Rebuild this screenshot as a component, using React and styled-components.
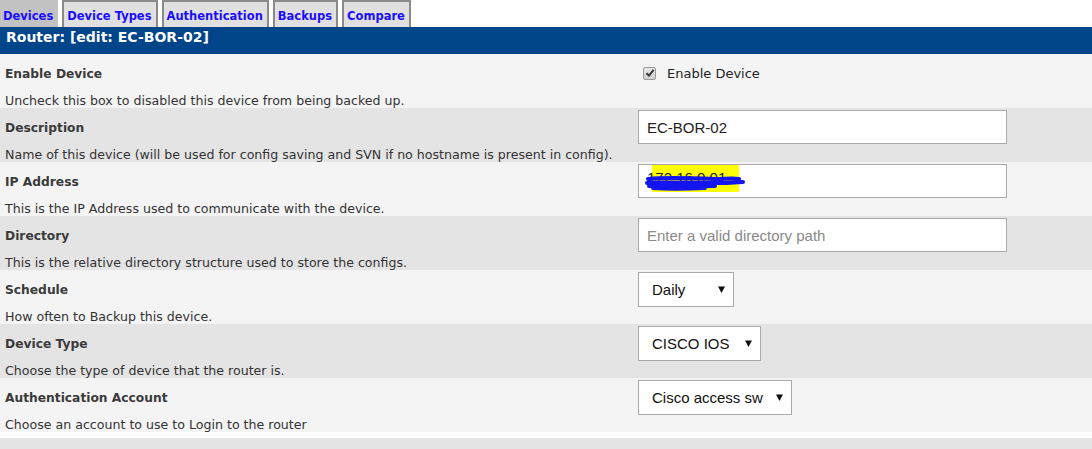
import React from 'react';
import styled, { createGlobalStyle } from 'styled-components';

const GlobalStyle = createGlobalStyle`
  body {
    margin: 0;
    background: #fff;
    font-family: "DejaVu Sans", Verdana, sans-serif;
  }
`

const tabs = ['Devices', 'Device Types', 'Authentication', 'Backups', 'Compare']

const rows = [
  { label: 'Enable Device', desc: 'Uncheck this box to disabled this device from being backed up.', kind: 'check' },
  { label: 'Description', desc: 'Name of this device (will be used for config saving and SVN if no hostname is present in config).', kind: 'text', value: 'EC-BOR-02' },
  { label: 'IP Address', desc: 'This is the IP Address used to communicate with the device.', kind: 'ip' },
  { label: 'Directory', desc: 'This is the relative directory structure used to store the configs.', kind: 'text', placeholder: 'Enter a valid directory path' },
  { label: 'Schedule', desc: 'How often to Backup this device.', kind: 'select', value: 'Daily', width: 96 },
  { label: 'Device Type', desc: 'Choose the type of device that the router is.', kind: 'select', value: 'CISCO IOS', width: 123 },
  { label: 'Authentication Account', desc: 'Choose an account to use to Login to the router', kind: 'select', value: 'Cisco access sw', width: 154 },
]

const Arrow = () => (
  <svg width="7" height="7" viewBox="0 0 7 7">
    <path d="M0 0.5 H7 L3.5 7 Z" fill="#111" />
  </svg>
)

const Tick = () => (
  <svg width="10" height="10" viewBox="0 0 10 10">
    <path d="M1.5 5.2 L4 7.6 L8.6 1.8" stroke="#333" strokeWidth="2" fill="none" />
  </svg>
)

const Control = ({ row }) => {
  if (row.kind === 'check') {
    return (
      <CheckLabel>
        <CheckBox><Tick /></CheckBox>
        Enable Device
      </CheckLabel>
    )
  }
  if (row.kind === 'select') {
    return (
      <SelectBox style={{ width: row.width }}>
        <span>{row.value}</span>
        <Arrow />
      </SelectBox>
    )
  }
  if (row.kind === 'ip') {
    return (
      <FakeInput>
        <Masked>
          <MaskedText>172.16.0.01</MaskedText>
          <Scribble width="100" height="18" viewBox="0 0 100 18">
            <path d="M3 5 C20 3 45 4 70 5 C80 5 88 4 94 5 M2 9 C25 8 50 9 75 9 C85 9 92 8 98 8 M4 12 C25 13 50 12 70 12 M8 14 C20 15 40 15 60 14"
              stroke="#1414f0" strokeWidth="4" fill="none" strokeLinecap="round" />
          </Scribble>
        </Masked>
      </FakeInput>
    )
  }
  return <TextInput defaultValue={row.value} placeholder={row.placeholder} />
}

const App = () => {
  return (
    <>
      <GlobalStyle />
      <TabBar>
        {tabs.map((t, i) => (
          <Tab key={t} active={i === 0}>{t}</Tab>
        ))}
      </TabBar>
      <Header>Router: [edit: EC-BOR-02]</Header>
      {rows.map((row, i) => (
        <Row key={row.label} dark={i % 2 === 1}>
          <LeftCell>
            <Label>{row.label}</Label>
            <Desc>{row.desc}</Desc>
          </LeftCell>
          <RightCell check={row.kind === 'check'}>
            <Control row={row} />
          </RightCell>
        </Row>
      ))}
      <Footer />
    </>
  );
};

const TabBar = styled.div`
  display: flex;
  gap: 4px;
  height: 27px;
`

const Tab = styled.div`
  box-sizing: border-box;
  height: 27px;
  padding: ${p => (p.active ? '2px 3px 0 3px' : '2px 4px 0 3px')};
  display: flex;
  align-items: center;
  font-size: 11.5px;
  font-weight: bold;
  color: #1a0dff;
  background: ${p => (p.active ? '#c2c2c2' : '#e0e0e0')};
  border: 2px solid ${p => (p.active ? '#c2c2c2' : '#8a8a8a')};
  border-left-width: ${p => (p.active ? '0' : '2px')};
  border-bottom: none;
`

const Header = styled.div`
  height: 27px;
  background: #00448a;
  color: #fff;
  font-size: 14px;
  font-weight: bold;
  padding-left: 6px;
  line-height: 21px;
`

const Row = styled.div`
  display: grid;
  grid-template-columns: 638px 1fr;
  height: 54px;
  background: ${p => (p.dark ? '#e4e4e4' : '#f4f4f4')};
`

const LeftCell = styled.div`
  padding: 11px 5px 0;
  display: flex;
  flex-direction: column;
  gap: 10px;
`

const Label = styled.div`
  font-size: 12.25px;
  font-weight: bold;
  line-height: 18px;
  color: #3a3a3a;
`

const Desc = styled.div`
  font-size: 12.6px;
  line-height: 15px;
  color: #333;
  white-space: nowrap;
`

const RightCell = styled.div`
  padding-top: ${p => (p.check ? '10px' : '2px')};
`

const CheckLabel = styled.div`
  display: flex;
  align-items: center;
  gap: 11px;
  height: 18px;
  padding-left: 5px;
  font-size: 13px;
  color: #222;
`

const CheckBox = styled.span`
  box-sizing: border-box;
  width: 13px;
  height: 13px;
  border: 1px solid #9a9a9a;
  border-radius: 2px;
  background: linear-gradient(#e8e8e8, #cfcfcf);
  display: flex;
  align-items: center;
  justify-content: center;
`

const TextInput = styled.input`
  box-sizing: border-box;
  width: 369px;
  height: 34px;
  border: 1px solid #a9a9a9;
  padding: 0 8px;
  font-family: "Liberation Sans", Arial, sans-serif;
  font-size: 15px;
  color: #222;
  background: #fff;
  outline: none;
  &::placeholder {
    color: #8a8a8a;
  }
`

const FakeInput = styled.div`
  box-sizing: border-box;
  width: 369px;
  height: 34px;
  border: 1px solid #a9a9a9;
  background: #fff;
  padding-left: 13px;
`

const Masked = styled.div`
  position: relative;
  width: 87px;
  height: 27px;
  background: #ffff00;
  font-family: "Liberation Sans", Arial, sans-serif;
  font-size: 15px;
  color: #223;
`

const MaskedText = styled.span`
  display: block;
  margin-left: -5px;
  padding-top: 4px;
`

const Scribble = styled.svg`
  position: absolute;
  left: -7px;
  top: 9px;
`

const SelectBox = styled.div`
  box-sizing: border-box;
  height: 35px;
  border: 1px solid #a9a9a9;
  background: #fff;
  display: flex;
  align-items: center;
  justify-content: space-between;
  padding: 0 8px 0 13px;
  font-family: "Liberation Sans", Arial, sans-serif;
  font-size: 15px;
  color: #111;
`

const Footer = styled.div`
  margin-top: 6px;
  height: 20px;
  background: #e4e4e4;
`

export default App;
